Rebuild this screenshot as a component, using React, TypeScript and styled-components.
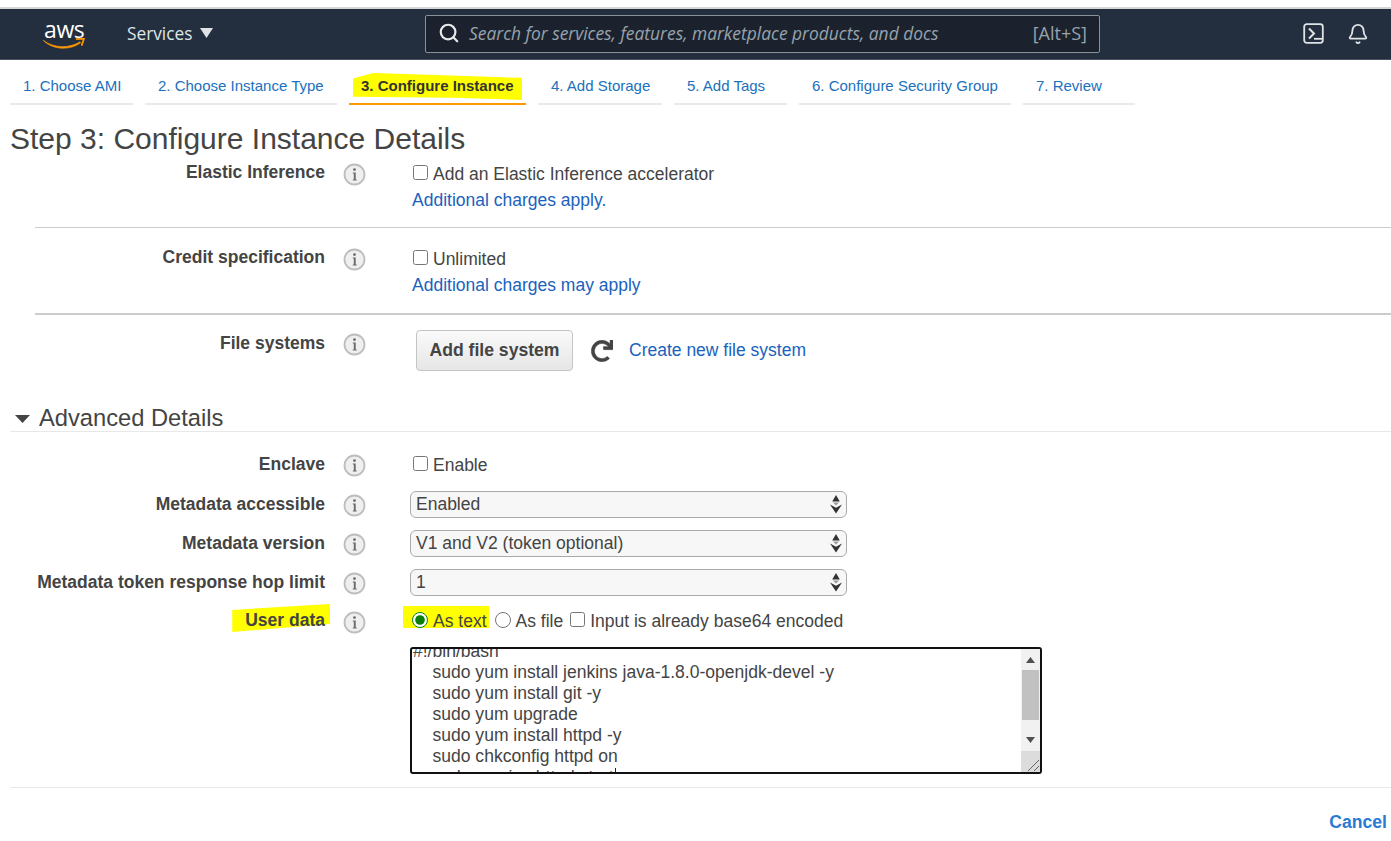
import React from "react";
import styled, { createGlobalStyle } from "styled-components";
import { Search, Bell } from "lucide-react";
import { FaRedo } from "react-icons/fa";

const Global = createGlobalStyle`
  html, body { margin: 0; padding: 0; background: #fff; }
  body { font-family: "Liberation Sans", Arial, sans-serif; color: #444; overflow: hidden; }
  * { box-sizing: border-box; }
`;

const Page = styled.div`
  width: 1391px;
  height: 841px;
  padding-top: 7px;
  overflow: hidden;
`;

const NavBar = styled.header`
  height: 53px;
  border-top: 2px solid #d6d6d6;
  border-bottom: 1px solid #4a535f;
  background: #232f3e;
  display: flex;
  align-items: center;
  padding-left: 44px;
  color: #dfe6ea;
  font-family: "Open Sans", sans-serif;
`;

const Logo = styled.div`
  width: 40px;
  height: 34px;
  flex: none;
`;
const LogoWord = styled.span`
  display: block;
  text-align: center;
  font-size: 23px;
  line-height: 24px;
  font-weight: 400;
  color: #fff;
  letter-spacing: -0.4px;
`;
const LogoSmile = styled.svg`
  display: block;
  margin: -3px 0 0 -1px;
`;

const Services = styled.div`
  margin-left: 43px;
  padding-bottom: 2px;
  display: flex;
  align-items: center;
  gap: 8px;
  font-size: 17.3px;
  width: 86px;
  flex: none;
  white-space: nowrap;
`;
const Caret = styled.svg`
  flex: none;
`;

const SearchBox = styled.div`
  margin-left: 212px;
  width: 675px;
  height: 38px;
  flex: none;
  background: #1b222d;
  border: 1px solid #8b9198;
  border-radius: 2px;
  display: flex;
  align-items: center;
  padding: 0 12px 2px 12px;
  color: #e6e8ea;
`;
const Placeholder = styled.span`
  margin-left: 9px;
  font-style: italic;
  font-size: 17.4px;
  color: #97a3ad;
  white-space: nowrap;
`;
const Shortcut = styled.span`
  margin-left: auto;
  font-size: 18px;
  color: #97a3ad;
`;
const NavIcons = styled.div`
  margin-left: 203px;
  padding-bottom: 1px;
  display: flex;
  align-items: center;
  gap: 23px;
  color: #dfe3e6;
`;

const Tabs = styled.nav`
  display: flex;
  gap: 12px;
  padding-left: 10px;
  height: 45px;
  align-items: flex-end;
`;
const Tab = styled.div<{ $w: number; $active?: boolean }>`
  position: relative;
  width: ${(p) => p.$w}px;
  height: 36px;
  padding: 5px 0 0 ${(p) => (p.$active ? 12 : 13)}px;
  font-size: 15px;
  line-height: 24px;
  white-space: nowrap;
  color: ${(p) => (p.$active ? "#333" : "#2070bd")};
  font-weight: ${(p) => (p.$active ? 700 : 400)};
  border-bottom: 2px solid ${(p) => (p.$active ? "#f90" : "#eaeaea")};
`;
const TabMarker = styled.span`
  position: absolute;
  left: 4px;
  top: 4px;
  width: 169px;
  height: 27px;
  background: #ffff00;
  clip-path: polygon(0 20%, 12% 0, 40% 6%, 100% 18%, 100% 100%, 60% 92%, 0 88%);
`;
const TabText = styled.span`
  position: relative;
`;

const Title = styled.h1`
  margin: 0;
  height: 55px;
  padding: 14px 0 0 10px;
  font-size: 30px;
  line-height: 40px;
  font-weight: 400;
  color: #444;
`;

const Section = styled.section<{ $h: number; $rule?: number; $pad?: number }>`
  margin-left: 35px;
  height: ${(p) => p.$h}px;
  padding-top: ${(p) => p.$pad ?? 0}px;
  border-bottom: ${(p) => p.$rule ?? 0}px solid #ccc;
`;

const Row = styled.div<{ $h?: number }>`
  display: grid;
  grid-template-columns: 290px 87px 1fr;
  height: ${(p) => (p.$h ? `${p.$h}px` : "auto")};
  align-items: start;
`;
const Label = styled.div`
  text-align: right;
  font-weight: 700;
  font-size: 17.5px;
  line-height: 24px;
  color: #444;
  white-space: nowrap;
`;
const LabelMark = styled.span`
  position: relative;
`;
const LabelMarker = styled.span`
  position: absolute;
  left: -13px;
  right: -5px;
  top: -6px;
  bottom: -2px;
  background: #ffff00;
  clip-path: polygon(0 21%, 100% 0, 100% 71%, 0 100%);
`;
const LabelText = styled.span`
  position: relative;
`;

const InfoWrap = styled.span<{ $top: number }>`
  display: block;
  margin: ${(p) => p.$top}px 0 0 18px;
  width: 23px;
  height: 23px;
`;

const Content = styled.div<{ $top?: number }>`
  margin-top: ${(p) => p.$top ?? 0}px;
  font-size: 17.5px;
  line-height: 26px;
  color: #444;
`;
const CheckLine = styled.label`
  display: flex;
  align-items: center;
  white-space: nowrap;
  height: 27px;
`;
const Check = styled.input`
  width: 15px;
  height: 15px;
  margin: -3px 5px 0 1px;
  flex: none;
`;
const Radio = styled.input`
  width: 16px;
  height: 16px;
  margin: -3px 5px 0 0;
  flex: none;
  accent-color: #0a7d0a;
`;
const A = styled.a`
  color: #1a62bd;
  text-decoration: none;
  font-size: 17.5px;
  line-height: 27px;
  display: block;
`;

const FileRow = styled.div`
  display: flex;
  align-items: center;
  margin: -1px 0 0 4px;
  height: 41px;
`;
const Button = styled.button`
  width: 157px;
  height: 41px;
  border: 1px solid #c4c4c4;
  border-radius: 4px;
  background: linear-gradient(#fafafa, #e6e6e6);
  font: 700 17.6px "Liberation Sans", sans-serif;
  color: #444;
  padding: 0;
`;
const Refresh = styled.span`
  margin-left: 18px;
  display: flex;
  color: #444;
`;
const CreateLink = styled(A)`
  margin-left: 16px;
`;

const AdvHead = styled.div`
  margin-left: 10px;
  height: 28px;
  border-bottom: 1px solid #e8e8e8;
  display: flex;
  align-items: center;
  padding: 2px 0 0 5px;
  font-size: 23.7px;
  color: #444;
  gap: 9px;
`;
const AdvBody = styled.div`
  margin-left: 35px;
  padding-top: 20px;
`;

const SelectWrap = styled.div`
  position: relative;
  width: 437px;
  margin: -1px 0 0 -2px;
`;
const Select = styled.select`
  appearance: none;
  display: block;
  width: 100%;
  height: 27px;
  border: 1px solid #aaa;
  border-radius: 6px;
  background: #f7f7f7;
  font: 17.5px "Liberation Sans", sans-serif;
  color: #444;
  padding: 0 0 2px 5px;
`;
const SelectArrows = styled.svg`
  position: absolute;
  right: 4px;
  top: 4px;
  pointer-events: none;
`;

const Options = styled.div`
  display: flex;
  align-items: center;
  white-space: nowrap;
  height: 26px;
`;
const OptionLabel = styled.label`
  display: flex;
  align-items: center;
  margin-right: 6px;
  position: relative;
  &:first-child {
    margin-right: 8px;
  }
`;
const OptionMarker = styled.span`
  position: absolute;
  left: -9px;
  right: -2px;
  top: -2px;
  bottom: 6px;
  background: #ffff00;
`;
const OptionInner = styled.span`
  position: relative;
  display: flex;
  align-items: center;
`;

const CodeBox = styled.div`
  width: 632px;
  height: 127px;
  margin-left: -2px;
  border: 2px solid #111;
  border-radius: 3px;
  display: flex;
  overflow: hidden;
  background: #fff;
`;
const Code = styled.pre`
  flex: 1;
  margin: -8px 0 0;
  padding: 0 0 0 1px;
  font: 17.55px/21px "Liberation Sans", sans-serif;
  color: #444;
  overflow: hidden;
`;
const TextCaret = styled.span`
  display: inline-block;
  width: 1px;
  height: 18px;
  margin-left: 1px;
  vertical-align: -3px;
  background: #222;
`;
const Scroll = styled.div`
  width: 19px;
  flex: none;
  display: flex;
  flex-direction: column;
  align-items: center;
  background: #f1f1f1;
`;
const ScrollBtn = styled.div`
  height: 22px;
  width: 100%;
  display: flex;
  align-items: center;
  justify-content: center;
`;
const Thumb = styled.div`
  height: 51px;
  width: 17px;
  background: #c1c1c1;
`;
const Track = styled.div`
  height: 10px;
`;
const Resizer = styled.div`
  margin-top: auto;
  height: 22px;
  width: 100%;
  background: #dcdcdc;
  display: flex;
  align-items: flex-end;
  justify-content: flex-end;
`;

const Footer = styled.footer`
  margin: 13px 0 0 10px;
  border-top: 1px solid #e8e8e8;
  padding: 23px 4px 0 0;
  text-align: right;
  font-size: 17.6px;
  font-weight: 700;
  line-height: 22px;
  color: #2a7ad3;
`;

const Info = ({ top = 2 }: { top?: number }) => (
  <InfoWrap $top={top}>
    <svg width="23" height="23" viewBox="0 0 23 23">
      <circle cx="11.5" cy="11.5" r="10" fill="#efefef" stroke="#bdbdbd" strokeWidth="1.8" />
      <circle cx="11.5" cy="6.6" r="1.4" fill="#6a6a6a" />
      <path d="M9.8 9.4h2.9v7h1v1.2H9.8v-1.2h1v-5.8h-1z" fill="#6a6a6a" />
    </svg>
  </InfoWrap>
);

const TerminalIcon = () => (
  <svg width="21" height="21" viewBox="0 0 21 21" fill="none" stroke="currentColor">
    <rect x="1.2" y="1.2" width="18.6" height="18.6" rx="2.5" strokeWidth="1.8" />
    <path d="M6 5.5l5 5-5 5" strokeWidth="2" />
    <path d="M11 15.8h8" strokeWidth="1.8" />
  </svg>
);

const Arrows = () => (
  <SelectArrows width="14" height="19" viewBox="0 0 14 19">
    <path d="M7 0l3.8 6.5H3.2z" fill="#333" />
    <path d="M4 7.5h6L7 10.5z" fill="#999" />
    <path d="M1 9.5l6 3.2 6-3.2-6 9z" fill="#333" />
  </SelectArrows>
);

const tabs = [
  { t: "1. Choose AMI", w: 123 },
  { t: "2. Choose Instance Type", w: 192 },
  { t: "3. Configure Instance", w: 177, active: true },
  { t: "4. Add Storage", w: 124 },
  { t: "5. Add Tags", w: 113 },
  { t: "6. Configure Security Group", w: 212 },
  { t: "7. Review", w: 112 },
];

const code = `#!/bin/bash
    sudo yum install jenkins java-1.8.0-openjdk-devel -y
    sudo yum install git -y
    sudo yum upgrade
    sudo yum install httpd -y
    sudo chkconfig httpd on
    sudo service httpd start`;

export default function App() {
  return (
    <Page>
      <Global />
      <NavBar>
        <Logo>
          <LogoWord>aws</LogoWord>
          <LogoSmile width="43" height="12" viewBox="0 0 43 12">
            <path d="M0 2.2c11 8.4 27 8.2 37 1.6l.6 1C28 12.4 10 12.4 0 2.2z" fill="#f90" stroke="#f90" strokeWidth=".6" />
            <path d="M33 1.2l8-.6-2.4 7" fill="none" stroke="#f90" strokeWidth="1.7" />
          </LogoSmile>
        </Logo>
        <Services>
          Services
          <Caret width="13" height="10" viewBox="0 0 13 10">
            <path d="M0 0h13L6.5 10z" fill="#dfe3e6" />
          </Caret>
        </Services>
        <SearchBox>
          <Search size={22} strokeWidth={2.4} />
          <Placeholder>Search for services, features, marketplace products, and docs</Placeholder>
          <Shortcut>[Alt+S]</Shortcut>
        </SearchBox>
        <NavIcons>
          <TerminalIcon />
          <Bell size={22} strokeWidth={2} />
        </NavIcons>
      </NavBar>

      <Tabs>
        {tabs.map((x) => (
          <Tab key={x.t} $w={x.w} $active={x.active}>
            {x.active && <TabMarker />}
            <TabText>{x.t}</TabText>
          </Tab>
        ))}
      </Tabs>

      <Title>Step 3: Configure Instance Details</Title>

      <Section $h={68} $rule={1}>
        <Row>
          <Label>Elastic Inference</Label>
          <Info top={3} />
          <Content>
            <CheckLine>
              <Check type="checkbox" />
              Add an Elastic Inference accelerator
            </CheckLine>
            <A>Additional charges apply.</A>
          </Content>
        </Row>
      </Section>
      <Section $h={87} $rule={2} $pad={17}>
        <Row>
          <Label>Credit specification</Label>
          <Info top={3} />
          <Content>
            <CheckLine>
              <Check type="checkbox" />
              Unlimited
            </CheckLine>
            <A>Additional charges may apply</A>
          </Content>
        </Row>
      </Section>
      <Section $h={89} $pad={16}>
        <Row>
          <Label>File systems</Label>
          <Info />
          <Content>
            <FileRow>
              <Button>Add file system</Button>
              <Refresh>
                <FaRedo size={22} stroke="currentColor" strokeWidth={12} />
              </Refresh>
              <CreateLink>Create new file system</CreateLink>
            </FileRow>
          </Content>
        </Row>
      </Section>

      <AdvHead>
        <svg width="15" height="8" viewBox="0 0 15 8">
          <path d="M0 0h15L7.5 8z" fill="#444" />
        </svg>
        Advanced Details
      </AdvHead>
      <AdvBody>
        <Row $h={40}>
          <Label>Enclave</Label>
          <Info />
          <Content $top={-1}>
            <CheckLine>
              <Check type="checkbox" />
              Enable
            </CheckLine>
          </Content>
        </Row>
        <Row $h={39}>
          <Label>Metadata accessible</Label>
          <Info />
          <SelectWrap>
            <Select defaultValue="Enabled">
              <option>Enabled</option>
            </Select>
            <Arrows />
          </SelectWrap>
        </Row>
        <Row $h={39}>
          <Label>Metadata version</Label>
          <Info />
          <SelectWrap>
            <Select defaultValue="V1 and V2 (token optional)">
              <option>V1 and V2 (token optional)</option>
            </Select>
            <Arrows />
          </SelectWrap>
        </Row>
        <Row $h={38}>
          <Label>Metadata token response hop limit</Label>
          <Info />
          <SelectWrap>
            <Select defaultValue="1">
              <option>1</option>
            </Select>
            <Arrows />
          </SelectWrap>
        </Row>
        <Row $h={39}>
          <Label>
            <LabelMark>
              <LabelMarker />
              <LabelText>User data</LabelText>
            </LabelMark>
          </Label>
          <Info top={3} />
          <Content>
            <Options>
              <OptionLabel>
                <OptionMarker />
                <OptionInner>
                  <Radio type="radio" name="ud" defaultChecked />
                  As text
                </OptionInner>
              </OptionLabel>
              <OptionLabel>
                <Radio type="radio" name="ud" />
                As file
              </OptionLabel>
              <OptionLabel>
                <Check type="checkbox" />
                Input is already base64 encoded
              </OptionLabel>
            </Options>
          </Content>
        </Row>
        <Row $h={127}>
          <span />
          <span />
          <CodeBox>
            <Code>
              {code}
              <TextCaret />
            </Code>
            <Scroll>
              <ScrollBtn>
                <svg width="9" height="6" viewBox="0 0 9 6"><path d="M4.5 0L9 6H0z" fill="#505050" /></svg>
              </ScrollBtn>
              <Thumb />
              <Track />
              <ScrollBtn>
                <svg width="9" height="6" viewBox="0 0 9 6"><path d="M0 0h9L4.5 6z" fill="#505050" /></svg>
              </ScrollBtn>
              <Resizer>
                <svg width="14" height="14" viewBox="0 0 14 14" stroke="#666" fill="none">
                  <path d="M2 13L13 2M8 13l5-5" />
                </svg>
              </Resizer>
            </Scroll>
          </CodeBox>
        </Row>
      </AdvBody>
      <Footer>Cancel</Footer>
    </Page>
  );
}
